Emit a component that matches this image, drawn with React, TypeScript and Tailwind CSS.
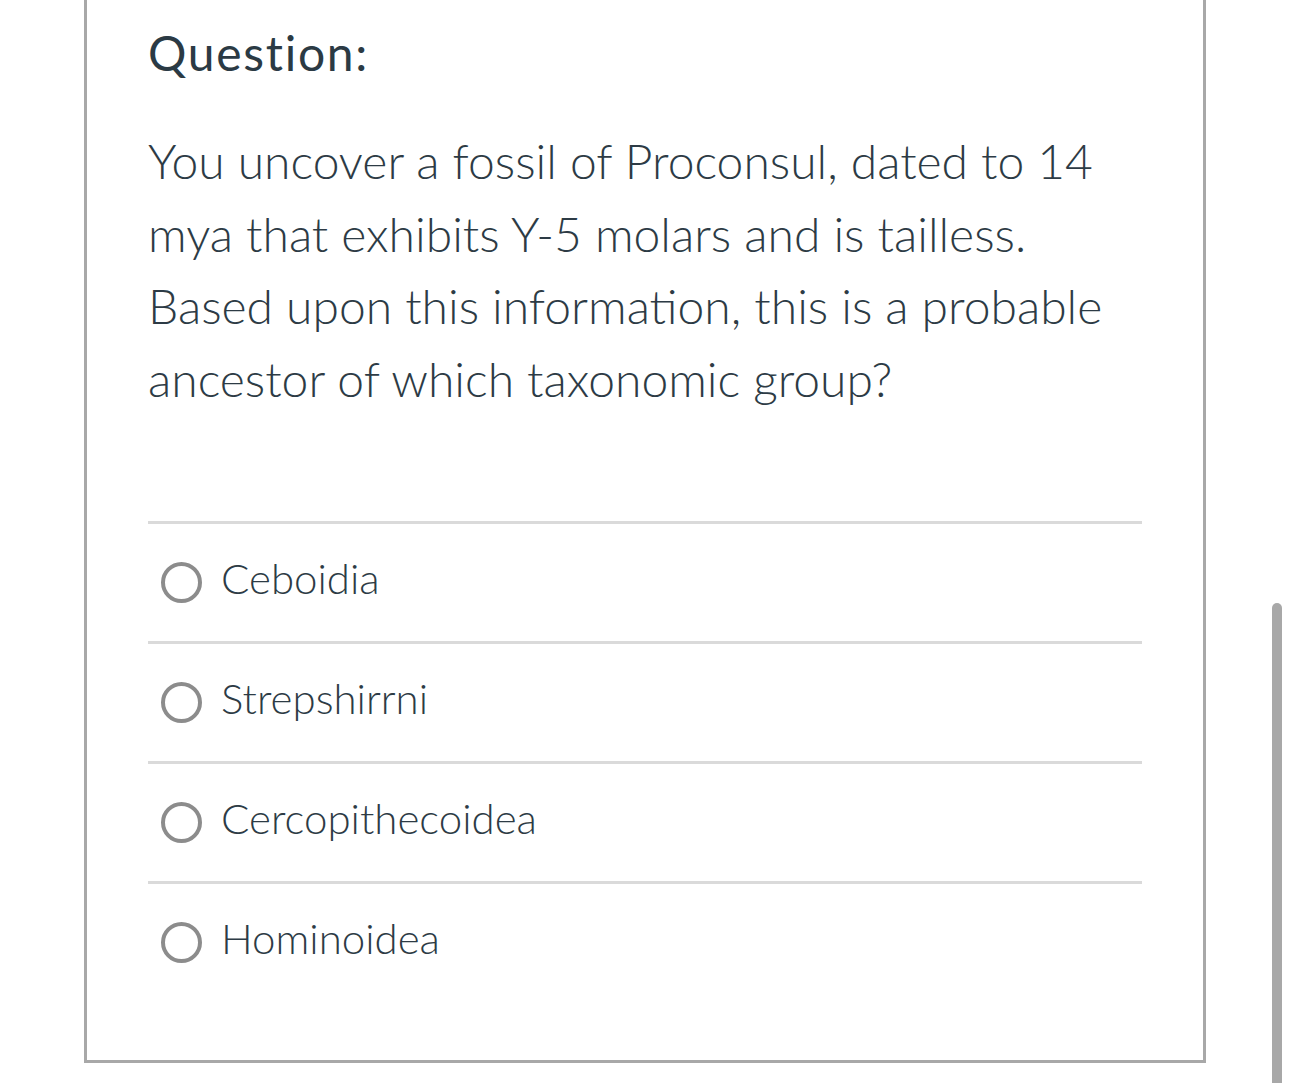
import React from 'react';

const options = ['Ceboidia', 'Strepshirrni', 'Cercopithecoidea', 'Hominoidea'];

const Radio = () => (
    <span className="block w-[41px] h-[41px] rounded-full border-[4px] border-[#8c8c8c] shrink-0" />
);

export default function App() {
    return (
        <div className="relative min-h-[1083px] bg-white font-['Lato',sans-serif] text-[#2d3b45]">
            {/* Question card */}
            <div className="ml-[84px] w-[1122px] border-x-[3px] border-b-[3px] border-[#a8a8a8] px-[61px] pt-[17px] pb-[59px]">
                <h2 className="text-[48px] leading-[72px] font-normal tracking-[1.7px] text-[#2b3a44]">Question:</h2>
                <p className="mt-[36px] text-[48px] leading-[72.5px] font-light">
                    You uncover a fossil of Proconsul, dated to 14 mya that exhibits Y-5 molars and is tailless. Based upon this information, this is a probable ancestor of which taxonomic group?
                </p>

                {/* Answers */}
                <ul className="mt-[106px]">
                    {options.map((opt) => (
                        <li
                            key={opt}
                            className="h-[120px] border-t-[3px] border-[#dadada] flex items-center pl-[13px] gap-[19px]"
                        >
                            <Radio />
                            <span className="text-[42px] font-light leading-none -mt-[9px]">{opt}</span>
                        </li>
                    ))}
                </ul>
            </div>

            {/* Scrollbar thumb */}
            <div className="absolute left-[1272px] top-[603px] w-[10px] h-[480px] rounded-t-full bg-[#a8a8a8]" />
        </div>
    );
}
